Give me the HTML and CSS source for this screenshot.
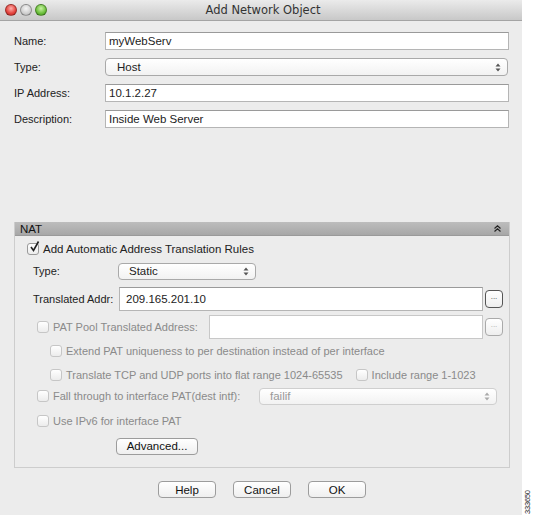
FILE: index.html
```html
<!DOCTYPE html>
<html lang="en">

<head>
    <meta charset="UTF-8">
    <meta name="viewport" content="width=device-width, initial-scale=1.0">
    <title>Add Network Object</title>
    <link rel="stylesheet" href="styles.css">
</head>

<body>

    <div class="window">
        <div class="titlebar">
            <div class="lights">
                <span class="light red"></span>
                <span class="light gray"></span>
                <span class="light green"></span>
            </div>
            <div class="title">Add Network Object</div>
        </div>

        <div class="content">
            <div class="fields">
                <div class="field-row">
                    <label>Name:</label>
                    <div class="text-input">myWebServ</div>
                </div>
                <div class="field-row">
                    <label>Type:</label>
                    <div class="select">
                        <span>Host</span>
                        <svg class="arrows" width="6" height="9" viewBox="0 0 6 9"><path d="M3 0.5 L5.5 3.5 H0.5 Z M3 8.5 L5.5 5.5 H0.5 Z" fill="#555"/></svg>
                    </div>
                </div>
                <div class="field-row">
                    <label>IP Address:</label>
                    <div class="text-input">10.1.2.27</div>
                </div>
                <div class="field-row">
                    <label>Description:</label>
                    <div class="text-input">Inside Web Server</div>
                </div>
            </div>

            <div class="nat-panel">
                <div class="nat-header">
                    <span>NAT</span>
                    <svg width="7" height="7" viewBox="0 0 7 7"><path d="M0.5 3.5 L3.5 0.8 L6.5 3.5 M0.5 6.5 L3.5 3.8 L6.5 6.5" fill="none" stroke="#222" stroke-width="1.2"/></svg>
                </div>
                <div class="nat-body">
                    <div class="row row-check-main">
                        <span class="checkbox checked">
                            <svg width="11" height="12" viewBox="0 0 11 12"><path d="M2 6 L4.5 9.5 L9.5 0.5" fill="none" stroke="#222" stroke-width="1.6"/></svg>
                        </span>
                        <span class="check-label big">Add Automatic Address Translation Rules</span>
                    </div>
                    <div class="row row-type">
                        <label class="nat-label">Type:</label>
                        <div class="select small">
                            <span>Static</span>
                            <svg class="arrows" width="6" height="9" viewBox="0 0 6 9"><path d="M3 0.5 L5.5 3.5 H0.5 Z M3 8.5 L5.5 5.5 H0.5 Z" fill="#555"/></svg>
                        </div>
                    </div>
                    <div class="row row-addr">
                        <label class="nat-label">Translated Addr:</label>
                        <div class="text-input tall">209.165.201.10</div>
                        <span class="dots-btn">...</span>
                    </div>
                    <div class="row row-pool disabled">
                        <span class="checkbox"></span>
                        <span class="check-label pool-label">PAT Pool Translated Address:</span>
                        <div class="text-input tall pale"></div>
                        <span class="dots-btn pale">...</span>
                    </div>
                    <div class="row row-sub row-extend disabled">
                        <span class="checkbox"></span>
                        <span class="check-label">Extend PAT uniqueness to per destination instead of per interface</span>
                    </div>
                    <div class="row row-sub row-flat disabled">
                        <span class="checkbox"></span>
                        <span class="check-label">Translate TCP and UDP ports into flat range 1024-65535</span>
                        <span class="checkbox include"></span>
                        <span class="check-label">Include range 1-1023</span>
                    </div>
                    <div class="row row-fall disabled">
                        <span class="checkbox"></span>
                        <span class="check-label fall-label">Fall through to interface PAT(dest intf):</span>
                        <div class="select pale wide">
                            <span>failif</span>
                            <svg class="arrows" width="6" height="9" viewBox="0 0 6 9"><path d="M3 0.5 L5.5 3.5 H0.5 Z M3 8.5 L5.5 5.5 H0.5 Z" fill="#aaa"/></svg>
                        </div>
                    </div>
                    <div class="row row-v6 disabled">
                        <span class="checkbox"></span>
                        <span class="check-label">Use IPv6 for interface PAT</span>
                    </div>
                    <div class="row row-adv">
                        <button class="btn advanced">Advanced...</button>
                    </div>
                </div>
            </div>

            <div class="actions">
                <button class="btn">Help</button>
                <button class="btn">Cancel</button>
                <button class="btn">OK</button>
            </div>
        </div>
    </div>

    <div class="side">
        <span class="fig-id">333650</span>
    </div>

</body>

</html>
```

FILE: styles.css
```css
body {
    font-family: "Liberation Sans", Arial, sans-serif;
    font-size: 11px;
    color: #222;
    margin: 0;
    padding: 0;
    display: flex;
    background-color: #ffffff;
    height: 515px;
    overflow: hidden;
}

.window {
    width: 522px;
    height: 515px;
    background-color: #ececec;
    display: flex;
    flex-direction: column;
}

.titlebar {
    height: 20px;
    position: relative;
    background: linear-gradient(#ebebeb, #c8c8c8);
    border-bottom: 1px solid #a4a4a4;
    display: flex;
    align-items: center;
    justify-content: center;
}

.lights {
    position: absolute;
    left: 5px;
    top: 4px;
    display: flex;
    gap: 3px;
}

.light {
    width: 12px;
    height: 12px;
    border-radius: 50%;
    border: 1px solid rgba(0, 0, 0, 0.3);
    box-sizing: border-box;
}

.light.red {
    background: radial-gradient(circle at 50% 35%, #ffb1ad, #e3423c 60%, #b52a24);
}

.light.gray {
    background: radial-gradient(circle at 50% 35%, #f5f5f5, #cfcfcf 60%, #aaa);
}

.light.green {
    background: radial-gradient(circle at 50% 35%, #c9f2a4, #6bbf3b 60%, #3f8d1d);
}

.title {
    font-family: "DejaVu Sans", sans-serif;
    font-size: 11.5px;
    color: #333;
    margin-left: 4px;
}

.content {
    flex: 1;
    display: flex;
    flex-direction: column;
    padding: 11px 12px 0 14px;
}

.fields {
    display: flex;
    flex-direction: column;
    gap: 8px;
    padding-right: 1px;
}

.field-row {
    display: flex;
    align-items: center;
    height: 18px;
}

.field-row label {
    width: 91px;
}

.text-input {
    flex: 1;
    height: 18px;
    box-sizing: border-box;
    background-color: #fff;
    border: 1px solid #b5b5b5;
    border-top-color: #9a9a9a;
    padding: 0 3px;
    line-height: 16px;
    font-size: 11.5px;
}

.text-input.tall {
    height: 24px;
    line-height: 22px;
    padding-left: 6px;
}

.text-input.pale {
    border-color: #c8c8c8;
}

.select {
    flex: 1;
    height: 18px;
    margin-right: 1px;
    box-sizing: border-box;
    background: linear-gradient(#ffffff, #f2f2f2);
    border: 1px solid #a9a9a9;
    border-radius: 4px;
    display: flex;
    align-items: center;
    justify-content: space-between;
    padding: 0 6px 0 11px;
    font-size: 11.5px;
}

.select.small {
    flex: none;
    width: 138px;
    height: 17px;
    padding-left: 10px;
}

.select.wide {
    flex: 1;
    height: 17px;
    margin-right: 12px;
    padding-left: 10px;
    color: #999;
    border-color: #cfcfcf;
}

.nat-panel {
    margin-top: 94px;
    border: 1px solid #cdcdcd;
    border-top: none;
    display: flex;
    flex-direction: column;
}

.nat-header {
    height: 13px;
    background: linear-gradient(#bdbdbd, #a7a7a7);
    border-bottom: 1px solid #9a9a9a;
    display: flex;
    align-items: center;
    justify-content: space-between;
    padding: 0 8px 0 5px;
    font-size: 11.5px;
    color: #111;
}

.nat-body {
    display: flex;
    flex-direction: column;
    padding: 1px 0 10px 12px;
}

.row {
    display: flex;
    align-items: center;
    height: 22px;
}

.row-check-main {
    height: 23px;
}

.checkbox {
    width: 12px;
    height: 12px;
    box-sizing: border-box;
    border: 1px solid #9a9a9a;
    border-radius: 3px;
    background: linear-gradient(#ffffff, #ececec);
    position: relative;
    flex: none;
}

.checkbox svg {
    position: absolute;
    left: 1px;
    top: -3px;
}

.disabled .checkbox {
    border-color: #c6c6c6;
}

.check-label {
    margin-left: 4px;
}

.check-label.big {
    font-size: 11.5px;
}

.disabled {
    color: #8a8a8a;
}

.nat-label {
    width: 85px;
    margin-left: 6px;
}

.row-addr {
    height: 24px;
    margin-top: 5px;
}

.row-addr .nat-label {
    width: 86px;
}

.row-pool {
    height: 24px;
    margin-top: 4px;
    padding-left: 10px;
}

.pool-label {
    width: 156px;
}

.dots-btn {
    width: 18px;
    height: 18px;
    box-sizing: border-box;
    margin: 0 6px 0 2px;
    border: 1.5px solid #555;
    border-radius: 4px;
    background: linear-gradient(#ffffff, #eeeeee);
    font-size: 8px;
    line-height: 12px;
    text-align: center;
    color: #444;
}

.dots-btn.pale {
    border-color: #aaa;
    color: #aaa;
}

.row-sub {
    padding-left: 23px;
}

.row-extend {
    margin-top: 1px;
}

.row-flat {
    margin-top: 2px;
}

.checkbox.include {
    margin-left: 13px;
}

.row-fall {
    padding-left: 10px;
    margin-top: -1px;
}

.fall-label {
    width: 206px;
}

.row-v6 {
    padding-left: 10px;
    margin-top: 3px;
}

.row-adv {
    padding-left: 89px;
    margin-top: 3px;
}

.btn {
    font-family: "Liberation Sans", Arial, sans-serif;
    font-size: 11.5px;
    color: #111;
    height: 17px;
    width: 58px;
    padding: 0;
    background: linear-gradient(#ffffff, #efefef);
    border: 1px solid #9c9c9c;
    border-radius: 4px;
}

.btn.advanced {
    width: 82px;
}

.actions {
    display: flex;
    justify-content: center;
    gap: 17px;
    margin-top: 13px;
}

.side {
    flex: 1;
    position: relative;
}

.fig-id {
    position: absolute;
    left: 0;
    bottom: 1px;
    transform: rotate(-90deg);
    transform-origin: left bottom;
    font-size: 7.5px;
    letter-spacing: -0.2px;
    color: #222;
    white-space: nowrap;
    margin-left: 10px;
}
```
